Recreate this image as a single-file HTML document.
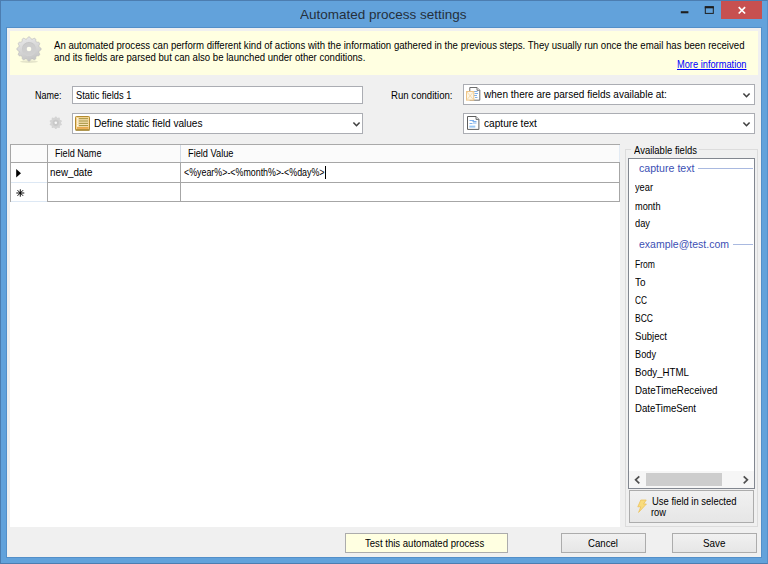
<!DOCTYPE html>
<html><head><meta charset="utf-8"><title>Automated process settings</title>
<style>
*{box-sizing:border-box;margin:0;padding:0}
html,body{width:768px;height:564px;overflow:hidden}
body{position:relative;background:#62a2db;font-family:"Liberation Sans",sans-serif;font-size:11px;color:#000}
.abs{position:absolute}
.t{position:absolute;white-space:nowrap;transform-origin:0 0;line-height:1}
.tb{background:#fff;border:1px solid #abadb3}
.btn{border:1px solid #acacac;background:linear-gradient(#f1f1f1,#e6e6e6)}
.hl{position:absolute;height:1px;background:#a6a6a6}
.vl{position:absolute;width:1px;background:#a6a6a6}
</style></head><body>
<div class="abs" style="left:0;top:0;width:768px;height:564px;border:1px solid #4c7db0;border-right-color:#5690c8"></div>
<!-- caption buttons -->
<svg class="abs" style="left:679px;top:9px" width="12" height="6" viewBox="0 0 12 6"><rect x="1.8" y="2.2" width="7.6" height="2.1" fill="#1e1e1e"/></svg>
<svg class="abs" style="left:704px;top:5px" width="12" height="10" viewBox="0 0 12 10"><rect x="1.3" y="1.8" width="8" height="6.6" fill="none" stroke="#1e1e1e" stroke-width="1"/><rect x="0.8" y="1.3" width="9" height="2" fill="#1e1e1e"/></svg>
<div class="abs" style="left:721px;top:1px;width:41px;height:18px;background:#c75050"></div>
<svg class="abs" style="left:737px;top:5px" width="10" height="10" viewBox="0 0 10 10"><path d="M1.7 2.1 L8.1 8.5 M8.1 2.1 L1.7 8.5" stroke="#fff" stroke-width="1.7"/></svg>

<div class="abs" style="left:7px;top:28px;width:754px;height:529px;background:#f0f0f0;outline:1px solid rgba(50,100,160,.3)"></div>
<div class="abs" style="left:10px;top:31px;width:748px;height:44px;background:#ffffe1"></div>
<!-- gear -->
<svg class="abs" style="left:13.7px;top:33.7px" width="30" height="30" viewBox="-15 -15 30 30">
<defs><linearGradient id="gg" x1="0" y1="0" x2="0.3" y2="1"><stop offset="0" stop-color="#ececec"/><stop offset="1" stop-color="#c6c6c6"/></linearGradient>
<linearGradient id="gi" x1="0" y1="0" x2="0.2" y2="1"><stop offset="0" stop-color="#c2c2c2"/><stop offset="1" stop-color="#d4d4d4"/></linearGradient></defs>
<ellipse cx="0" cy="12.6" rx="9" ry="1.3" fill="#cfcfb8" opacity=".55"/>
<path id="gp" d="M0.00 -12.10L0.39 -12.06L0.78 -11.92L1.14 -11.61L1.46 -11.10L1.75 -10.59L2.04 -10.25L2.35 -10.06L2.67 -9.95L3.00 -9.89L3.36 -9.90L3.78 -10.05L4.29 -10.35L4.81 -10.62L5.28 -10.71L5.69 -10.64L6.05 -10.48L6.37 -10.25L6.64 -9.93L6.79 -9.48L6.82 -8.89L6.81 -8.30L6.89 -7.86L7.06 -7.54L7.28 -7.28L7.54 -7.06L7.86 -6.89L8.30 -6.81L8.89 -6.82L9.48 -6.79L9.93 -6.64L10.25 -6.37L10.48 -6.05L10.64 -5.69L10.71 -5.28L10.62 -4.81L10.35 -4.29L10.05 -3.78L9.90 -3.36L9.89 -3.00L9.95 -2.67L10.06 -2.35L10.25 -2.04L10.59 -1.75L11.10 -1.46L11.61 -1.14L11.92 -0.78L12.06 -0.39L12.10 -0.00L12.06 0.39L11.92 0.78L11.61 1.14L11.10 1.46L10.59 1.75L10.25 2.04L10.06 2.35L9.95 2.67L9.89 3.00L9.90 3.36L10.05 3.78L10.35 4.29L10.62 4.81L10.71 5.28L10.64 5.69L10.48 6.05L10.25 6.37L9.93 6.64L9.48 6.79L8.89 6.82L8.30 6.81L7.86 6.89L7.54 7.06L7.28 7.28L7.06 7.54L6.89 7.86L6.81 8.30L6.82 8.89L6.79 9.48L6.64 9.93L6.37 10.25L6.05 10.48L5.69 10.64L5.28 10.71L4.81 10.62L4.29 10.35L3.78 10.05L3.36 9.90L3.00 9.89L2.67 9.95L2.35 10.06L2.04 10.25L1.75 10.59L1.46 11.10L1.14 11.61L0.78 11.92L0.39 12.06L0.00 12.10L-0.39 12.06L-0.78 11.92L-1.14 11.61L-1.46 11.10L-1.75 10.59L-2.04 10.25L-2.35 10.06L-2.67 9.95L-3.00 9.89L-3.36 9.90L-3.78 10.05L-4.29 10.35L-4.81 10.62L-5.28 10.71L-5.69 10.64L-6.05 10.48L-6.37 10.25L-6.64 9.93L-6.79 9.48L-6.82 8.89L-6.81 8.30L-6.89 7.86L-7.06 7.54L-7.28 7.28L-7.54 7.06L-7.86 6.89L-8.30 6.81L-8.89 6.82L-9.48 6.79L-9.93 6.64L-10.25 6.37L-10.48 6.05L-10.64 5.69L-10.71 5.28L-10.62 4.81L-10.35 4.29L-10.05 3.78L-9.90 3.36L-9.89 3.00L-9.95 2.67L-10.06 2.35L-10.25 2.04L-10.59 1.75L-11.10 1.46L-11.61 1.14L-11.92 0.78L-12.06 0.39L-12.10 0.00L-12.06 -0.39L-11.92 -0.78L-11.61 -1.14L-11.10 -1.46L-10.59 -1.75L-10.25 -2.04L-10.06 -2.35L-9.95 -2.67L-9.89 -3.00L-9.90 -3.36L-10.05 -3.78L-10.35 -4.29L-10.62 -4.81L-10.71 -5.28L-10.64 -5.69L-10.48 -6.05L-10.25 -6.37L-9.93 -6.64L-9.48 -6.79L-8.89 -6.82L-8.30 -6.81L-7.86 -6.89L-7.54 -7.06L-7.28 -7.28L-7.06 -7.54L-6.89 -7.86L-6.81 -8.30L-6.82 -8.89L-6.79 -9.48L-6.64 -9.93L-6.37 -10.25L-6.05 -10.48L-5.69 -10.64L-5.28 -10.71L-4.81 -10.62L-4.29 -10.35L-3.78 -10.05L-3.36 -9.90L-3.00 -9.89L-2.67 -9.95L-2.35 -10.06L-2.04 -10.25L-1.75 -10.59L-1.46 -11.10L-1.14 -11.61L-0.78 -11.92L-0.39 -12.06Z" fill="url(#gg)" stroke="#bcbcbc" stroke-width="0.7"/>
<circle r="7.1" fill="url(#gi)"/>
<circle r="6.2" fill="#cfcfcf" opacity=".7"/>
<circle r="2.3" fill="#fffff0"/>
</svg>

<!-- Name -->
<div class="abs tb" style="left:72px;top:86px;width:291px;height:18px"></div>
<div class="abs tb" style="left:72px;top:113px;width:291px;height:21px"></div>
<div class="abs tb" style="left:463px;top:84px;width:292px;height:21px"></div>
<div class="abs tb" style="left:463px;top:113px;width:292px;height:21px"></div>
<!-- chevrons -->
<svg class="abs" style="left:352px;top:120.5px" width="9" height="7" viewBox="0 0 9 7"><path d="M1.4 1.5 L4.5 4.7 L7.6 1.5" fill="none" stroke="#404040" stroke-width="1.6"/></svg>
<svg class="abs" style="left:742px;top:91.5px" width="9" height="7" viewBox="0 0 9 7"><path d="M1.4 1.5 L4.5 4.7 L7.6 1.5" fill="none" stroke="#404040" stroke-width="1.6"/></svg>
<svg class="abs" style="left:742px;top:120.5px" width="9" height="7" viewBox="0 0 9 7"><path d="M1.4 1.5 L4.5 4.7 L7.6 1.5" fill="none" stroke="#404040" stroke-width="1.6"/></svg>

<!-- small gear -->
<svg class="abs" style="left:48.6px;top:115.6px" width="13.6" height="13.6" viewBox="-14 -14 28 28">
<path d="M0.00 -13.10L0.81 -12.93L1.55 -12.27L2.14 -11.23L2.70 -10.51L3.31 -10.18L3.99 -10.08L4.87 -10.34L5.96 -10.84L6.94 -10.94L7.70 -10.60L8.26 -9.98L8.47 -9.02L8.33 -7.82L8.36 -6.91L8.66 -6.29L9.16 -5.81L10.01 -5.51L11.19 -5.27L12.04 -4.77L12.46 -4.05L12.55 -3.22L12.15 -2.32L11.34 -1.43L10.82 -0.68L10.70 -0.00L10.82 0.68L11.34 1.43L12.15 2.32L12.55 3.22L12.46 4.05L12.04 4.77L11.19 5.27L10.01 5.51L9.16 5.81L8.66 6.29L8.36 6.91L8.33 7.82L8.47 9.02L8.26 9.98L7.70 10.60L6.94 10.94L5.96 10.84L4.87 10.34L3.99 10.08L3.31 10.18L2.70 10.51L2.14 11.23L1.55 12.27L0.81 12.93L0.00 13.10L-0.81 12.93L-1.55 12.27L-2.14 11.23L-2.70 10.51L-3.31 10.18L-3.99 10.08L-4.87 10.34L-5.96 10.84L-6.94 10.94L-7.70 10.60L-8.26 9.98L-8.47 9.02L-8.33 7.82L-8.36 6.91L-8.66 6.29L-9.16 5.81L-10.01 5.51L-11.19 5.27L-12.04 4.77L-12.46 4.05L-12.55 3.22L-12.15 2.32L-11.34 1.43L-10.82 0.68L-10.70 0.00L-10.82 -0.68L-11.34 -1.43L-12.15 -2.32L-12.55 -3.22L-12.46 -4.05L-12.04 -4.77L-11.19 -5.27L-10.01 -5.51L-9.16 -5.81L-8.66 -6.29L-8.36 -6.91L-8.33 -7.82L-8.47 -9.02L-8.26 -9.98L-7.70 -10.60L-6.94 -10.94L-5.96 -10.84L-4.87 -10.34L-3.99 -10.08L-3.31 -10.18L-2.70 -10.51L-2.14 -11.23L-1.55 -12.27L-0.81 -12.93Z" fill="#d4d4d4"/>
<circle r="6.4" fill="#c9c9c9"/><circle r="2.6" fill="#f8f8f8"/>
</svg>
<!-- table icon -->
<svg class="abs" style="left:75px;top:116px" width="16" height="15" viewBox="0 0 16 15">
<rect x="0.5" y="0.5" width="14" height="13.4" rx="0.8" fill="#f4d391" stroke="#b48c30"/>
<path d="M0.5 14.1H14.7" stroke="#8f6f14" stroke-width="1"/>
<rect x="2" y="2" width="11.4" height="9.2" fill="#f9e3b4"/>
<path d="M3.6 2.7H13 M3.6 5H13 M3.6 7.3H13 M3.6 9.6H13" stroke="#94862c" stroke-width="0.9" fill="none"/>
<path d="M2 2.7H3.4 M2 5H3.4 M2 7.3H3.4 M2 9.6H3.4" stroke="#fffaf0" stroke-width="1.1"/>
<rect x="2" y="11" width="11.4" height="1.8" fill="#e9a94e"/>
</svg>
<!-- doc icons -->
<svg class="abs" style="left:466px;top:86px" width="16" height="16" viewBox="0 0 16 16">
<path d="M3.8 1.5H11L13.8 4.3V14.2H3.8Z" fill="#fff" stroke="#6c6c6c" stroke-width="1"/>
<path d="M11 1.5V4.3H13.8" fill="#ededed" stroke="#6c6c6c" stroke-width="0.9"/>
<path d="M8 5.5H11.5 M8.5 7.5H12 M8 9.5H11 M9 11.5H11.5" stroke="#7fb0ea" stroke-width="1"/>
<rect x="0.5" y="5.5" width="7.3" height="8.6" fill="#fdf6e6" stroke="#efc587" stroke-width="1"/>
<path d="M0.8 5.8L7.5 13.8 M7.5 5.8L0.8 13.8" stroke="#f3d4a4" stroke-width="0.8" fill="none"/>
</svg>
<svg class="abs" style="left:466px;top:115px" width="16" height="16" viewBox="0 0 16 16">
<path d="M1.5 1.5H10L12.9 4.4V14.4H1.5Z" fill="#fff" stroke="#5e5e5e" stroke-width="1"/>
<path d="M10 1.5V4.4H12.9" fill="#ededed" stroke="#5e5e5e" stroke-width="0.9"/>
<path d="M3.5 5.5H8 M6.5 6.5H10.5 M3.5 8.5H6.5 M7 8H10.5" stroke="#7fb0ea" stroke-width="1"/>
<rect x="3.3" y="10.6" width="6" height="2" fill="#9cc8f4"/>
</svg>

<!-- grid -->
<div class="abs" style="left:10px;top:144px;width:610px;height:383px;background:#fff"></div>
<div class="abs" style="left:11px;top:145px;width:608px;height:17px;background:#fbfbfb"></div>
<div class="hl" style="left:10px;top:144px;width:610px;background:#a9a9a9"></div>
<div class="hl" style="left:10px;top:162px;width:610px"></div>
<div class="hl" style="left:47px;top:182px;width:573px"></div>
<div class="hl" style="left:47px;top:201px;width:573px"></div>
<div class="hl" style="left:11px;top:182px;width:36px;background:#dde8f4"></div>
<div class="hl" style="left:11px;top:201px;width:36px;background:#dde8f4"></div>
<div class="vl" style="left:10px;top:144px;height:58px"></div>
<div class="vl" style="left:47px;top:144px;height:58px"></div>
<div class="vl" style="left:180px;top:162px;height:40px"></div>
<div class="vl" style="left:180px;top:145px;height:17px;background:#d3dbe5"></div>
<div class="vl" style="left:619px;top:162px;height:40px"></div>
<div class="vl" style="left:619px;top:145px;height:17px;background:#e3ebf4"></div>
<svg class="abs" style="left:16px;top:168px" width="6" height="10" viewBox="0 0 6 10"><path d="M0.2 1 L5 5.2 L0.2 9.4Z" fill="#000"/></svg>
<svg class="abs" style="left:15px;top:189px" width="10" height="9" viewBox="0 0 10 9"><path d="M5.3 0.3V7.7 M1.3 4H9.3 M2.5 1.2L8.1 6.8 M8.1 1.2L2.5 6.8" stroke="#000" stroke-width="0.95" fill="none"/></svg>
<div class="abs" style="left:325px;top:166px;width:1px;height:13px;background:#000"></div>

<!-- group box -->
<div class="abs" style="left:625px;top:149px;width:133px;height:378px;border:1px solid #dcdcdc"></div>
<div class="abs" style="left:631px;top:145px;width:68px;height:10px;background:#f0f0f0"></div>
<div class="abs" style="left:628px;top:158px;width:127px;height:331px;background:#fff;border:1px solid #828790"></div>
<div class="abs" style="left:698px;top:168px;width:55px;height:1px;background:#a9b9e0"></div>
<div class="abs" style="left:733px;top:244px;width:20px;height:1px;background:#a9b9e0"></div>
<!-- scrollbar -->
<div class="abs" style="left:629px;top:471px;width:125px;height:17px;background:#f6f6f6"></div>
<div class="abs" style="left:646px;top:473px;width:76px;height:13px;background:#cdcdcd"></div>
<svg class="abs" style="left:634px;top:475px" width="7" height="10" viewBox="0 0 7 10"><path d="M5.3 1.3 L1.6 4.8 L5.3 8.3" fill="none" stroke="#505050" stroke-width="1.7"/></svg>
<svg class="abs" style="left:742px;top:475px" width="7" height="10" viewBox="0 0 7 10"><path d="M1.7 1.3 L5.4 4.8 L1.7 8.3" fill="none" stroke="#505050" stroke-width="1.7"/></svg>
<!-- use field button -->
<div class="abs btn" style="left:629px;top:490px;width:125px;height:33px"></div>
<svg class="abs" style="left:636px;top:499px" width="12" height="15" viewBox="0 0 12 15"><path d="M4.8 1 L10.2 1 L7.6 5 L10.4 5 L2.6 13.4 L4.8 7.8 L1.8 7.8 Z" fill="#f9dc7c" stroke="#ecc25a" stroke-width="0.8"/></svg>

<!-- bottom buttons -->
<div class="abs btn" style="left:345px;top:533px;width:163px;height:20px;background:#ffffe1"></div>
<div class="abs btn" style="left:561px;top:533px;width:85px;height:20px"></div>
<div class="abs btn" style="left:672px;top:533px;width:85px;height:20px"></div>

<div class="t" style="left:300.00px;top:7.90px;font-size:13px;color:#25303c;transform:scaleX(1.0379)">Automated process settings</div>
<div class="t" style="left:54.00px;top:39.86px;font-size:11px;transform:scaleX(0.8731)">An automated process can perform different kind of actions with the information gathered in the previous steps. They usually run once the email has been received</div>
<div class="t" style="left:54.00px;top:51.86px;font-size:11px;transform:scaleX(0.8717)">and its fields are parsed but can also be launched under other conditions.</div>
<div class="t" style="left:677.00px;top:58.66px;font-size:11px;color:#0000ff;text-decoration:underline;transform:scaleX(0.8419)">More information</div>
<div class="t" style="left:35.00px;top:89.86px;font-size:11px;transform:scaleX(0.8177)">Name:</div>
<div class="t" style="left:75.50px;top:89.86px;font-size:11px;transform:scaleX(0.8483)">Static fields 1</div>
<div class="t" style="left:391.00px;top:90.46px;font-size:11px;transform:scaleX(0.8745)">Run condition:</div>
<div class="t" style="left:483.80px;top:89.36px;font-size:11px;transform:scaleX(0.9119)">when there are parsed fields available at:</div>
<div class="t" style="left:483.80px;top:118.36px;font-size:11px;transform:scaleX(0.9203)">capture text</div>
<div class="t" style="left:94.00px;top:117.86px;font-size:11px;transform:scaleX(0.9146)">Define static field values</div>
<div class="t" style="left:54.50px;top:147.86px;font-size:11px;transform:scaleX(0.8267)">Field Name</div>
<div class="t" style="left:187.50px;top:147.86px;font-size:11px;transform:scaleX(0.8392)">Field Value</div>
<div class="t" style="left:50.00px;top:166.86px;font-size:11px;transform:scaleX(0.8906)">new_date</div>
<div class="t" style="left:184.00px;top:166.86px;font-size:11px;transform:scaleX(0.8062)">&lt;%year%&gt;-&lt;%month%&gt;-&lt;%day%&gt;</div>
<div class="t" style="left:633.50px;top:144.56px;font-size:11px;transform:scaleX(0.8608)">Available fields</div>
<div class="t" style="left:639.00px;top:162.95px;font-size:11.5px;color:#3c50b4;transform:scaleX(0.9236)">capture text</div>
<div class="t" style="left:635.00px;top:182.36px;font-size:11px;transform:scaleX(0.8409)">year</div>
<div class="t" style="left:635.00px;top:200.56px;font-size:11px;transform:scaleX(0.8339)">month</div>
<div class="t" style="left:635.00px;top:218.36px;font-size:11px;transform:scaleX(0.8451)">day</div>
<div class="t" style="left:639.00px;top:239.15px;font-size:11.5px;color:#3c50b4;transform:scaleX(0.9127)">example@test.com</div>
<div class="t" style="left:635.00px;top:258.86px;font-size:11px;transform:scaleX(0.7791)">From</div>
<div class="t" style="left:635.00px;top:276.86px;font-size:11px;transform:scaleX(0.9032)">To</div>
<div class="t" style="left:635.00px;top:294.86px;font-size:11px;transform:scaleX(0.7552)">CC</div>
<div class="t" style="left:635.00px;top:312.86px;font-size:11px;transform:scaleX(0.7747)">BCC</div>
<div class="t" style="left:635.00px;top:330.86px;font-size:11px;transform:scaleX(0.8719)">Subject</div>
<div class="t" style="left:635.00px;top:348.86px;font-size:11px;transform:scaleX(0.8374)">Body</div>
<div class="t" style="left:635.00px;top:366.86px;font-size:11px;transform:scaleX(0.8832)">Body_HTML</div>
<div class="t" style="left:635.00px;top:384.86px;font-size:11px;transform:scaleX(0.8858)">DateTimeReceived</div>
<div class="t" style="left:635.00px;top:402.86px;font-size:11px;transform:scaleX(0.8726)">DateTimeSent</div>
<div class="t" style="left:651.50px;top:495.56px;font-size:11px;transform:scaleX(0.8583)">Use field in selected</div>
<div class="t" style="left:651.00px;top:507.06px;font-size:11px;transform:scaleX(0.8458)">row</div>
<div class="t" style="left:365.30px;top:537.86px;font-size:11px;transform:scaleX(0.8703)">Test this automated process</div>
<div class="t" style="left:588.00px;top:537.86px;font-size:11px;transform:scaleX(0.8759)">Cancel</div>
<div class="t" style="left:703.00px;top:537.86px;font-size:11px;transform:scaleX(0.8972)">Save</div>
</body></html>
